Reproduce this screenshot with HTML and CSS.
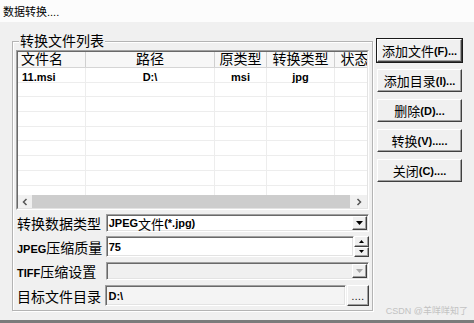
FILE: index.html
```html
<!DOCTYPE html>
<html lang="zh">
<head>
    <meta charset="UTF-8">
    <title>数据转换....</title>
    <link rel="stylesheet" href="styles.css">
</head>
<body>
    <div class="titlebar">数据转换....</div>
    <div class="dialog">
        <div class="group">
            <div class="legend">转换文件列表</div>
            <div class="list">
                <div class="list-inner">
                    <div class="lv-head">
                        <span class="c1 left">文件名</span>
                        <span class="c2">路径</span>
                        <span class="c3">原类型</span>
                        <span class="c4">转换类型</span>
                        <span class="c5">状态</span>
                    </div>
                    <div class="lv-body">
                        <div class="lv-row">
                            <span class="c1 left">11.msi</span>
                            <span class="c2">D:\</span>
                            <span class="c3">msi</span>
                            <span class="c4">jpg</span>
                            <span class="c5"></span>
                        </div>
                        <div class="lv-row"><span class="c1"></span><span class="c2"></span><span class="c3"></span><span class="c4"></span><span class="c5"></span></div>
                        <div class="lv-row"><span class="c1"></span><span class="c2"></span><span class="c3"></span><span class="c4"></span><span class="c5"></span></div>
                        <div class="lv-row"><span class="c1"></span><span class="c2"></span><span class="c3"></span><span class="c4"></span><span class="c5"></span></div>
                        <div class="lv-row"><span class="c1"></span><span class="c2"></span><span class="c3"></span><span class="c4"></span><span class="c5"></span></div>
                        <div class="lv-row"><span class="c1"></span><span class="c2"></span><span class="c3"></span><span class="c4"></span><span class="c5"></span></div>
                        <div class="lv-row"><span class="c1"></span><span class="c2"></span><span class="c3"></span><span class="c4"></span><span class="c5"></span></div>
                        <div class="lv-row"><span class="c1"></span><span class="c2"></span><span class="c3"></span><span class="c4"></span><span class="c5"></span></div>
                        <div class="lv-row"><span class="c1"></span><span class="c2"></span><span class="c3"></span><span class="c4"></span><span class="c5"></span></div>
                    </div>
                    <div class="hscroll">
                        <div class="arrow a-left">
                            <svg width="6" height="8" viewBox="0 0 6 8"><path d="M4.5 1 L1.5 4 L4.5 7" fill="none" stroke="#555" stroke-width="1.5"/></svg>
                        </div>
                        <div class="thumb"></div>
                        <div class="arrow a-right">
                            <svg width="6" height="8" viewBox="0 0 6 8"><path d="M1.5 1 L4.5 4 L1.5 7" fill="none" stroke="#555" stroke-width="1.5"/></svg>
                        </div>
                    </div>
                </div>
            </div>

            <div class="form">
                <div class="frow r1">
                    <div class="label">转换数据类型</div>
                    <div class="field combo">
                        <div class="value"><b>JPEG</b>文件<b>(*.jpg)</b></div>
                        <div class="drop">
                            <svg width="7" height="4" viewBox="0 0 7 4"><polygon points="0,0 7,0 3.5,4" fill="#000"/></svg>
                        </div>
                    </div>
                </div>
                <div class="frow r2">
                    <div class="label"><b>JPEG</b>压缩质量</div>
                    <div class="field spin-input">
                        <div class="value"><b>75</b></div>
                    </div>
                    <div class="spin">
                        <div class="spin-btn">
                            <svg width="5" height="3" viewBox="0 0 5 3"><polygon points="0,3 5,3 2.5,0" fill="#000"/></svg>
                        </div>
                        <div class="spin-btn">
                            <svg width="5" height="3" viewBox="0 0 5 3"><polygon points="0,0 5,0 2.5,3" fill="#000"/></svg>
                        </div>
                    </div>
                </div>
                <div class="frow r3">
                    <div class="label"><b>TIFF</b>压缩设置</div>
                    <div class="field combo disabled">
                        <div class="value"></div>
                        <div class="drop">
                            <svg width="7" height="4" viewBox="0 0 7 4"><polygon points="0,0 7,0 3.5,4" fill="#a8a8a8"/></svg>
                        </div>
                    </div>
                </div>
                <div class="frow r4">
                    <div class="label">目标文件目录</div>
                    <div class="field dir">
                        <div class="value"><b>D:\</b></div>
                    </div>
                    <div class="browse">....</div>
                </div>
            </div>
        </div>

        <div class="side">
            <div class="btn default">添加文件<b>(F)...</b></div>
            <div class="btn">添加目录<b>(I)...</b></div>
            <div class="btn">删除<b>(D)...</b></div>
            <div class="btn">转换<b>(V).....</b></div>
            <div class="btn">关闭<b>(C)....</b></div>
        </div>

        <div class="watermark">CSDN @羊咩咩知了</div>
    </div>
    <div class="strip"></div>
</body>
</html>
```

FILE: styles.css
```css
* {
    box-sizing: border-box;
}
body {
    margin: 0;
    width: 474px;
    height: 323px;
    overflow: hidden;
    background-color: #f0f0f0;
    font-family: "Liberation Sans", "Noto Sans CJK SC", sans-serif;
    font-size: 13px;
    color: #000;
}
b {
    font-family: "Liberation Sans", sans-serif;
    font-size: 11px;
    font-weight: bold;
}
.titlebar {
    height: 22px;
    padding-left: 3px;
    font-size: 11px;
    line-height: 25px;
    background-color: #fcfcfc;
}
.dialog {
    position: relative;
    height: 298px;
    display: flex;
    align-items: flex-start;
    padding-left: 12px;
    background-color: #f0f0f0;
}
.strip {
    height: 3px;
    background-color: #7b7b7b;
}

/* group box */
.group {
    position: relative;
    width: 361px;
    height: 270px;
    margin-top: 19px;
    padding: 8px 3px 0 3px;
    border: 1px solid #b4b4b4;
    box-shadow: inset 1px 1px #fff, 1px 1px #fff;
}
.legend {
    position: absolute;
    top: -10px;
    left: 6px;
    padding: 0 1px;
    font-size: 14px;
    line-height: 18px;
    background-color: #f0f0f0;
}

/* list view */
.list {
    width: 353px;
    height: 160px;
    border: 1px solid;
    border-color: #a0a0a0 #fff #fff #a0a0a0;
}
.list-inner {
    height: 100%;
    display: flex;
    flex-direction: column;
    border: 1px solid;
    border-color: #696969 #e3e3e3 #e3e3e3 #696969;
    background-color: #fff;
}
.c1 { width: 68px; }
.c2 { width: 129px; }
.c3 { width: 52px; }
.c4 { width: 68px; }
.c5 { width: 40px; }
.lv-head {
    display: flex;
    height: 16px;
    overflow: hidden;
    font-size: 14px;
    line-height: 15px;
    background-color: #f7f7f7;
    border-bottom: 1px solid #d5d5d5;
}
.lv-head span {
    flex: none;
    text-align: center;
    white-space: nowrap;
    overflow: hidden;
    border-right: 1px solid #d0d0d0;
}
.lv-head span.left {
    text-align: left;
    padding-left: 3px;
}
.lv-body {
    height: 127px;
    overflow: hidden;
}
.lv-row {
    display: flex;
    height: 14.7px;
    border-bottom: 1px solid #ededed;
}
.lv-row span {
    flex: none;
    text-align: center;
    font-weight: bold;
    font-size: 11px;
    line-height: 18px;
    white-space: nowrap;
    border-right: 1px solid #ededed;
}
.lv-row span.left {
    text-align: left;
    padding-left: 4px;
}
.hscroll {
    height: 13px;
    display: flex;
    background-color: #f0f0f0;
}
.hscroll .arrow {
    display: flex;
    align-items: center;
    justify-content: center;
}
.a-left { width: 14px; }
.a-right { width: 17px; }
.thumb {
    flex: 1;
    background-color: #cdcdcd;
}

/* form rows */
.form {
    padding-left: 1px;
}
.frow {
    display: flex;
    align-items: center;
}
.r1 { height: 18px; margin-top: 4px; }
.r2 { height: 21px; margin-top: 4px; }
.r3 { height: 18px; margin-top: 5px; }
.r4 { height: 21px; margin-top: 5px; }
.label {
    width: 89px;
    font-size: 14px;
    white-space: nowrap;
}
.label b {
    font-size: 11px;
}
.field {
    height: 100%;
    display: flex;
    border: 1px solid;
    border-color: #a0a0a0 #fff #fff #a0a0a0;
    box-shadow: inset 1px 1px #696969, inset -1px -1px #e3e3e3;
    background-color: #fff;
}
.field .value {
    flex: 1;
    padding-left: 2px;
    display: flex;
    align-items: center;
    font-size: 13px;
    white-space: nowrap;
}
.combo { width: 264px; }
.combo .drop,
.spin-btn,
.browse {
    display: flex;
    align-items: center;
    justify-content: center;
    background-color: #f0f0f0;
    border: 1px solid;
    border-color: #fff #404040 #404040 #fff;
    box-shadow: inset -1px -1px #a0a0a0;
}
.combo .drop {
    width: 15px;
    margin: 1px 1px 1px 0;
}
.combo.disabled {
    background-color: #f0f0f0;
}
.spin-input { width: 249px; }
.spin {
    width: 15px;
    height: 100%;
    display: flex;
    flex-direction: column;
}
.spin-btn {
    flex: 1;
}
.dir {
    width: 242px;
    background-color: #f4f4f4;
}
.browse {
    width: 22px;
    height: 21px;
    margin-left: 1px;
    align-items: flex-end;
    padding-bottom: 4px;
    font-size: 10px;
    line-height: 8px;
    letter-spacing: 0.5px;
}

/* side buttons */
.side {
    display: flex;
    flex-direction: column;
    gap: 7px;
    margin-top: 17px;
    margin-left: 4px;
}
.btn {
    width: 85px;
    height: 23px;
    display: flex;
    align-items: center;
    justify-content: center;
    font-size: 13px;
    white-space: nowrap;
    background-color: #f0f0f0;
    border: 1px solid;
    border-color: #fff #404040 #404040 #fff;
    box-shadow: inset -1px -1px #a0a0a0;
}
.btn.default {
    outline: 1px solid #1a1a1a;
}
.watermark {
    position: absolute;
    right: 6px;
    bottom: 3px;
    font-size: 9px;
    color: #c2c2c2;
}
```
